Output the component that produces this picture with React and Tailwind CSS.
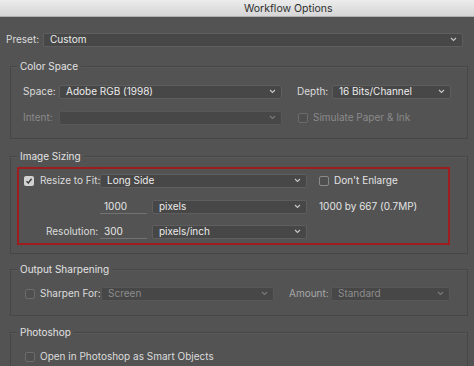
import React from 'react';

// small macOS-style chevron used in every popup button
const Chevron = ({ dim }) => (
    <svg width="7" height="5" viewBox="0 0 7 5" className={dim ? 'text-[#7a7a7a]' : 'text-[#c8c8c8]'}>
        <path d="M1 1l2.5 2.5L6 1" fill="none" stroke="currentColor" strokeWidth="1.1" />
    </svg>
);

const Select = ({ value, className = '', dim }) => (
    <div className={`flex items-center justify-between h-[14px] pl-[6px] pr-[5px] bg-[#474747] border border-[#5e5e5e] rounded-[2px] ${className}`}>
        <span className={dim ? 'text-[#8c8c8c]' : 'text-[#ececec]'}>{value}</span>
        <Chevron dim={dim} />
    </div>
);

const Check = ({ checked, dim }) => (
    <div className={`w-[10px] h-[10px] rounded-[2px] flex items-center justify-center ${checked ? 'bg-[#d2d2d2]' : dim ? 'border border-[#6c6c6c] bg-[#4f4f4f]' : 'border border-[#8a8a8a] bg-[#4f4f4f]'}`}>
        {checked && (
            <svg width="8" height="8" viewBox="0 0 8 8">
                <path d="M1.5 4.2l1.8 1.8L6.6 1.8" fill="none" stroke="#3a3a3a" strokeWidth="1.4" />
            </svg>
        )}
    </div>
);

const Group = ({ title, className = '', children }) => (
    <div className={`relative ml-[10px] w-[458px] border border-[#464646] shadow-[inset_0_1px_0_#5a5a5a] ${className}`}>
        <span className="absolute left-[6px] top-[-7px] px-[3px] bg-[#535353] leading-[12px] text-[#e2e2e2]">{title}</span>
        {children}
    </div>
);

const Field = ({ value }) => (
    <div className="w-[47px] h-[14px] pl-[4px] border-b border-[#727272] leading-[13px] text-[#e6e6e6]">{value}</div>
);

export default function App() {
    return (
        <div className="w-[474px] h-[366px] overflow-hidden whitespace-nowrap bg-[#535353] text-[10px] text-[#dcdcdc]" style={{ fontFamily: 'Inter, "Noto Sans", sans-serif' }}>
            {/* title bar */}
            <div className="h-[17px] pl-[244px] bg-gradient-to-b from-[#ececec] to-[#d5d5d5] border-b border-[#b0b0b0] text-[10.5px] leading-[17px] text-[#2e2e2e]">
                Workflow Options
            </div>

            {/* preset */}
            <div className="mt-[15px] flex items-center">
                <span className="w-[43px] pl-[6px]">Preset:</span>
                <Select value="Custom" className="w-[420px]" />
            </div>

            {/* Color Space */}
            <Group title="Color Space" className="mt-[19px] h-[73px]">
                <div className="mt-[17px] flex items-center">
                    <span className="w-[48px] pl-[12px]">Space:</span>
                    <Select value="Adobe RGB (1998)" className="w-[223px]" />
                    <span className="ml-[15px] w-[35px]">Depth:</span>
                    <Select value="16 Bits/Channel" className="w-[119px]" />
                </div>
                <div className="mt-[11px] flex items-center">
                    <span className="w-[48px] pl-[12px] text-[#8a8a8a]">Intent:</span>
                    <Select value="" className="w-[223px] bg-[#4e4e4e] border-[#575757]" dim />
                    <div className="ml-[16px] flex items-center gap-[5px] text-[#8a8a8a]">
                        <Check dim />
                        <span>Simulate Paper &amp; Ink</span>
                    </div>
                </div>
            </Group>

            {/* Image Sizing */}
            <Group title="Image Sizing" className="mt-[17px] h-[98px]">
                <div className="mt-[10px] ml-[6px] w-[433px] h-[78px] border-2 border-[#9e1c1e] pt-[4px]">
                    <div className="flex items-center">
                        <div className="ml-[5px]"><Check checked /></div>
                        <span className="ml-[6px] w-[60px]">Resize to Fit:</span>
                        <Select value="Long Side" className="w-[207px]" />
                        <div className="ml-[12px] flex items-center gap-[5px]">
                            <Check />
                            <span className="text-[#e4e4e4]">Don&apos;t Enlarge</span>
                        </div>
                    </div>
                    <div className="mt-[11px] flex items-center">
                        <div className="ml-[81px]"><Field value="1000" /></div>
                        <Select value="pixels" className="ml-[5px] w-[155px]" />
                        <span className="ml-[12px] text-[#e4e4e4]">1000 by 667 (0.7MP)</span>
                    </div>
                    <div className="mt-[10px] flex items-center">
                        <span className="w-[81px] pl-[27px]">Resolution:</span>
                        <Field value="300" />
                        <Select value="pixels/inch" className="ml-[5px] w-[155px]" />
                    </div>
                </div>
            </Group>

            {/* Output Sharpening */}
            <Group title="Output Sharpening" className="mt-[15px] h-[47px]">
                <div className="mt-[16px] flex items-center">
                    <div className="ml-[14px]"><Check dim /></div>
                    <span className="ml-[5px] w-[61px]">Sharpen For:</span>
                    <Select value="Screen" className="w-[173px] bg-[#4e4e4e] border-[#575757]" dim />
                    <span className="ml-[15px] w-[42px] text-[#a8a8a8]">Amount:</span>
                    <Select value="Standard" className="w-[119px] bg-[#4e4e4e] border-[#575757]" dim />
                </div>
            </Group>

            {/* Photoshop */}
            <Group title="Photoshop" className="mt-[16px] h-[60px]">
                <div className="mt-[16px] flex items-center">
                    <div className="ml-[14px]"><Check dim /></div>
                    <span className="ml-[5px]">Open in Photoshop as Smart Objects</span>
                </div>
            </Group>
        </div>
    );
}
